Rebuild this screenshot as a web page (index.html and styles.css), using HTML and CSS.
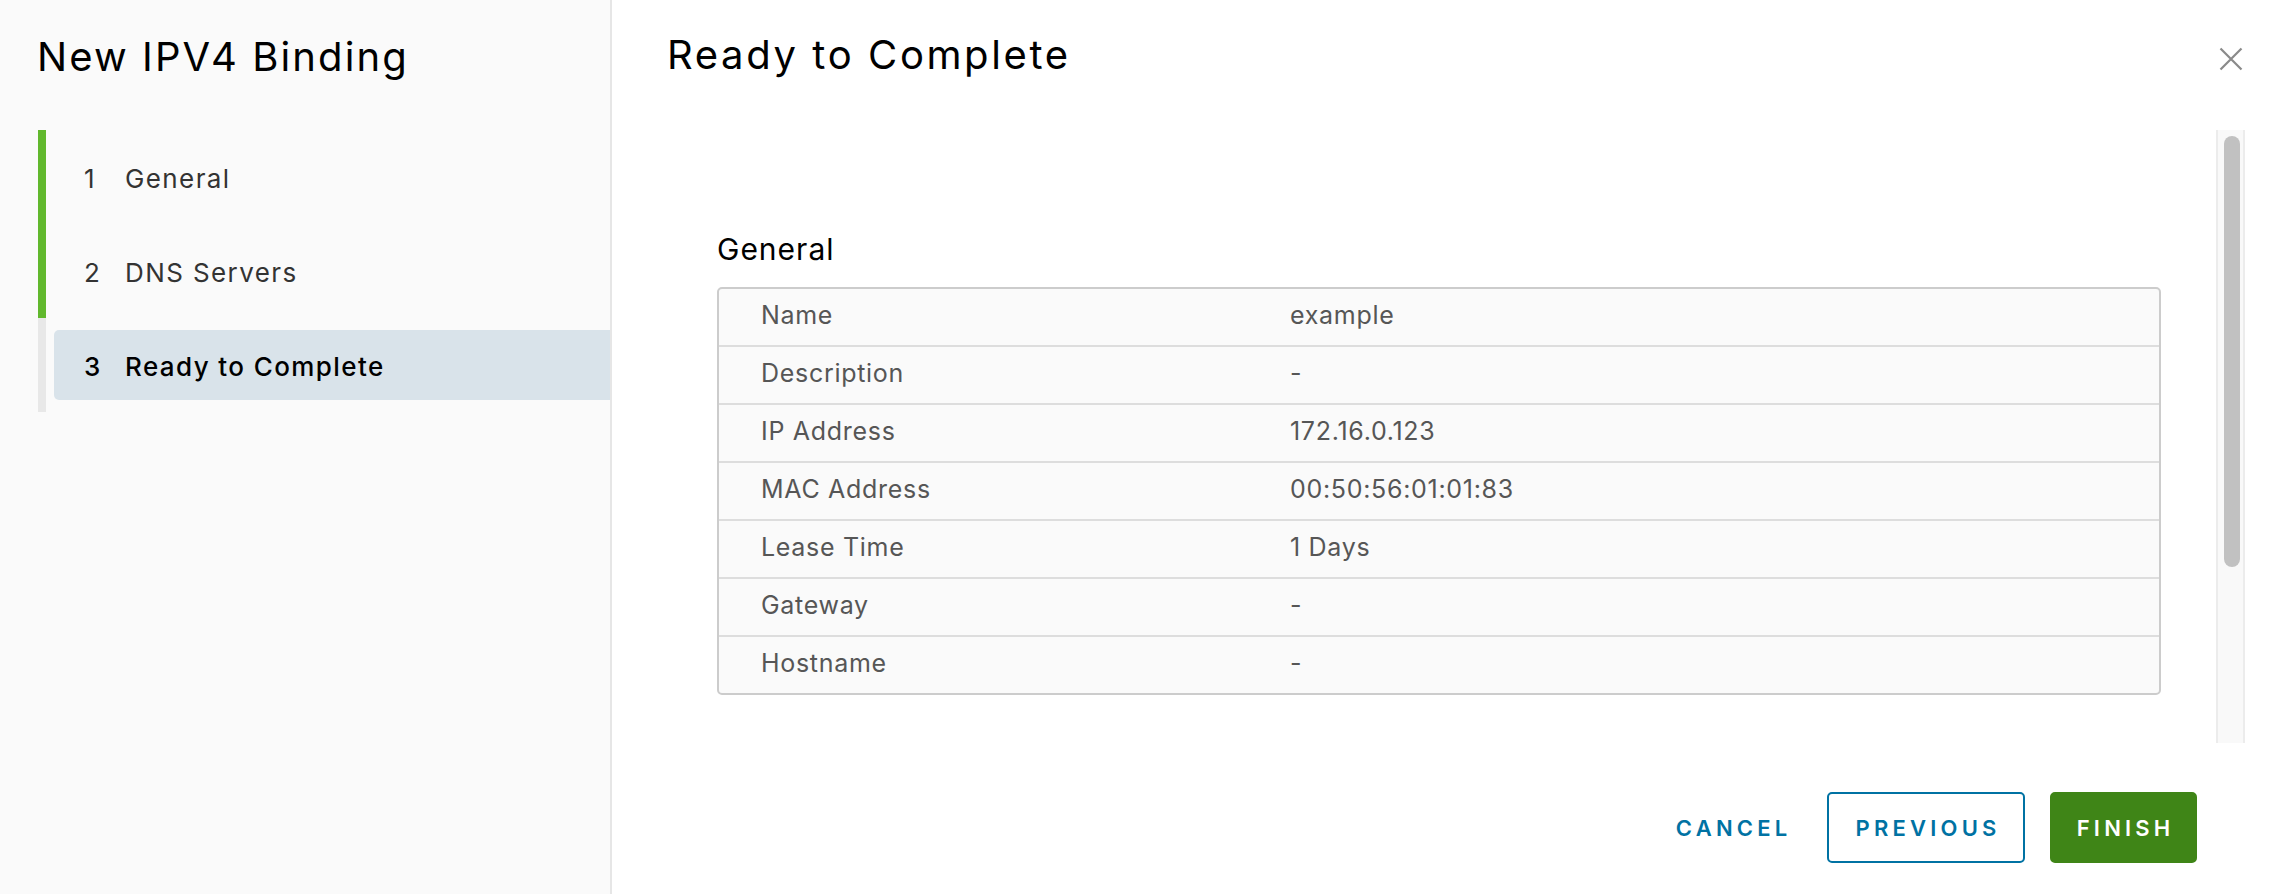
FILE: index.html
```html
<!DOCTYPE html>
<html lang="en">
<head>
<meta charset="utf-8">
<title>New IPV4 Binding</title>
<link rel="stylesheet" href="styles.css">
</head>
<body>
<div class="wizard">
  <aside class="sidebar">
    <h1 class="wizard-title">New IPV4 Binding</h1>
    <ol class="steps">
      <li class="step done"><div class="step-inner"><span class="num">1</span><span class="label">General</span></div></li>
      <li class="step done"><div class="step-inner"><span class="num">2</span><span class="label">DNS Servers</span></div></li>
      <li class="step current"><div class="step-inner"><span class="num">3</span><span class="label">Ready to Complete</span></div></li>
    </ol>
  </aside>
  <main class="main">
    <header class="main-header">
      <h2 class="page-title">Ready to Complete</h2>
      <button class="close" aria-label="Close">
        <svg viewBox="0 0 24 24" width="24" height="24"><path d="M1.5 1.5 L22.5 22.5 M22.5 1.5 L1.5 22.5" stroke="#8a8a8a" stroke-width="2.2" fill="none"/></svg>
      </button>
    </header>
    <div class="body-row">
      <div class="content">
        <h3 class="section-title">General</h3>
        <div class="kv-table">
          <div class="kv-row"><div class="k">Name</div><div class="v">example</div></div>
          <div class="kv-row"><div class="k">Description</div><div class="v">-</div></div>
          <div class="kv-row"><div class="k">IP Address</div><div class="v">172.16.0.123</div></div>
          <div class="kv-row"><div class="k">MAC Address</div><div class="v">00:50:56:01:01:83</div></div>
          <div class="kv-row"><div class="k">Lease Time</div><div class="v">1 Days</div></div>
          <div class="kv-row"><div class="k">Gateway</div><div class="v">-</div></div>
          <div class="kv-row"><div class="k">Hostname</div><div class="v">-</div></div>
        </div>
      </div>
      <div class="scrollbar"><div class="thumb"></div></div>
    </div>
    <footer class="footer">
      <button class="btn btn-link">CANCEL</button>
      <button class="btn btn-outline">PREVIOUS</button>
      <button class="btn btn-success">FINISH</button>
    </footer>
  </main>
</div>
</body>
</html>
```
FILE: styles.css
```css
* { box-sizing: border-box; }
html, body { margin: 0; padding: 0; }
body {
  width: 2274px;
  height: 894px;
  overflow: hidden;
  font-family: Inter, "Open Sans", sans-serif;
  background: #ffffff;
  color: #000;
}
.wizard {
  display: flex;
  height: 894px;
}
.sidebar {
  width: 612px;
  flex: none;
  background: #fafafa;
  border-right: 2px solid #e6e6e6;
  padding-top: 33px;
}
.wizard-title {
  margin: 0 0 49px 0;
  padding-left: 37px;
  font-size: 40px;
  line-height: 48px;
  font-weight: 400;
  color: #000;
  letter-spacing: 2.1px;
}
.steps {
  list-style: none;
  margin: 0 0 0 38px;
  padding: 0;
}
.step {
  height: 94px;
  border-left: 8px solid #e8e8e8;
  padding: 12px 0 12px 8px;
}
.step.done { border-left-color: #61b82d; }
.step-inner {
  height: 70px;
  display: flex;
  align-items: center;
  padding-left: 30px;
  padding-top: 4px;
  border-radius: 5px 0 0 5px;
  font-size: 26px;
  line-height: 1;
  color: #333;
}
.step.current .step-inner {
  background: #d9e3ea;
  color: #000;
  font-weight: 500;
}
.num { width: 41px; flex: none; }
.label { letter-spacing: 1.4px; }

.main {
  flex: 1;
  display: flex;
  flex-direction: column;
  min-width: 0;
}
.main-header {
  height: 130px;
  display: flex;
  justify-content: space-between;
  align-items: flex-start;
  padding: 31px 31px 0 55px;
}
.page-title {
  margin: 0;
  font-size: 40px;
  line-height: 48px;
  font-weight: 400;
  color: #000;
  letter-spacing: 2.6px;
}
.close {
  margin-top: 16px;
  padding: 0;
  border: 0;
  background: none;
  width: 24px;
  height: 24px;
  display: block;
}
.close svg { display: block; }

.body-row {
  height: 613px;
  display: flex;
  padding-right: 29px;
}
.content {
  flex: 1;
  padding: 101px 55px 0 105px;
}
.section-title {
  margin: 0 0 20px 0;
  font-size: 30px;
  line-height: 36px;
  font-weight: 400;
  color: #000;
  letter-spacing: 1px;
}
.kv-table {
  background: #fafafa;
  border: 2px solid #cccccc;
  border-radius: 5px;
}
.kv-row {
  display: grid;
  grid-template-columns: 571px 1fr;
  height: 56px;
  align-items: center;
  font-size: 25px;
  line-height: 1;
  color: #565656;
  padding-bottom: 3px;
  letter-spacing: 0.7px;
}
.kv-row + .kv-row {
  border-top: 2px solid #dddddd;
  height: 58px;
}
.k { padding-left: 42px; }

.scrollbar {
  width: 29px;
  flex: none;
  background: #f9f9f9;
  border-left: 2px solid #ececec;
  border-right: 2px solid #ececec;
  padding: 6px 3px 0 6px;
}
.thumb {
  width: 16px;
  height: 431px;
  border-radius: 8px;
  background: #c1c1c1;
}

.footer {
  flex: 1;
  display: flex;
  justify-content: flex-end;
  align-items: flex-start;
  padding: 49px 77px 0 0;
}
.btn {
  height: 71px;
  border-radius: 5px;
  border: 2px solid transparent;
  background: none;
  font-family: Inter, "Open Sans", sans-serif;
  font-size: 22px;
  font-weight: 600;
  letter-spacing: 4.2px;
  text-indent: 4.2px;
  padding: 0;
  display: flex;
  align-items: center;
  justify-content: center;
}
.btn-link {
  width: 167px;
  color: #0072a3;
  margin-right: 12px;
}
.btn-outline {
  width: 198px;
  color: #0072a3;
  border-color: #0072a3;
  background: #fff;
  margin-right: 25px;
}
.btn-success {
  width: 147px;
  color: #fff;
  background: #3f8517;
  border-color: #3f8517;
}
```
